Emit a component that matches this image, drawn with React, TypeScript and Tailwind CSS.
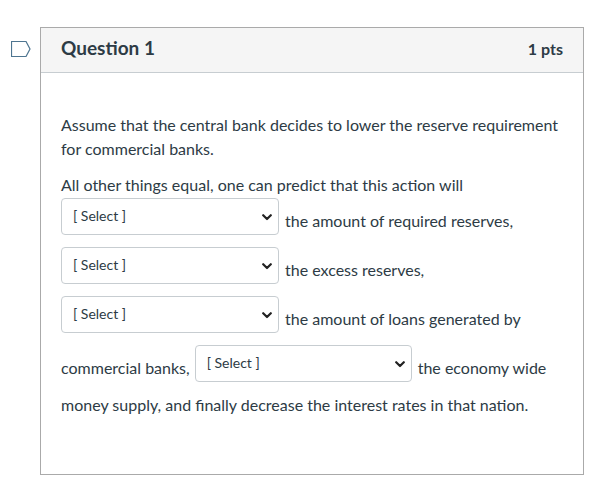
import React from "react";

function Chevron() {
  return (
    <svg width="10" height="7" viewBox="0 0 10 7" className="block">
      <path d="M1.2 1.2 L5 5 L8.8 1.2" fill="none" stroke="#222" strokeWidth="2.2" strokeLinecap="round" strokeLinejoin="round" />
    </svg>
  );
}

function Select({ w }: { w: string }) {
  return (
    <div className={`${w} h-[37px] mt-[1px] shrink-0 rounded-[4px] border border-[#c7cdd1] bg-white flex items-start justify-between pl-[11px] pr-[6px]`}>
      <span className="text-[14px] leading-[20px] mt-[7px] text-[#2d3b45]">[ Select ]</span>
      <span className="mt-[15px]"><Chevron /></span>
    </div>
  );
}

export default function App() {
  return (
    <div className="w-[600px] h-[501px] bg-white relative" style={{ fontFamily: "Lato, 'Noto Sans', sans-serif" }}>
      <div className="pt-[27px] flex">
        <div className="w-[40px] shrink-0 flex justify-start pl-[11px] pt-[14px]">
          <svg width="20" height="16" viewBox="0 0 20 16" className="block">
            <path d="M0.5 0.5 H15 L19 8 L15 15.5 H0.5 Z" fill="none" stroke="#4e7590" strokeWidth="1.2" />
          </svg>
        </div>
        <div className="w-[544px] h-[448px] border border-[#aaaaaa] flex flex-col text-[#2d3b45]">
          <div className="h-[45px] bg-[#f5f5f5] border-b border-[#c7cdd1] flex items-start justify-between pl-[20px] pr-[20px]">
            <span className="text-[19px] font-bold leading-[24px] mt-[8px]">Question 1</span>
            <span className="text-[16px] font-bold leading-[24px] mt-[9px] text-[#2d3b45]">1 pts</span>
          </div>
          <div className="pl-[20px] pt-[40px] text-[16px] leading-[24px]">
            <p className="w-[510px]">
              Assume that the central bank decides to lower the reserve requirement for commercial banks.
            </p>
            <p className="mt-[12px]">All other things equal, one can predict that this action will</p>
            <div className="h-[49px] flex items-start">
              <Select w="w-[218px]" />
              <span className="ml-[6px] mt-[12px]">the amount of required reserves,</span>
            </div>
            <div className="h-[49px] flex items-start">
              <Select w="w-[218px]" />
              <span className="ml-[6px] mt-[12px]">the excess reserves,</span>
            </div>
            <div className="h-[49px] flex items-start">
              <Select w="w-[218px]" />
              <span className="ml-[6px] mt-[12px]">the amount of loans generated by</span>
            </div>
            <div className="h-[49px] flex items-start">
              <span className="mt-[12px] mr-[5px]">commercial banks,</span>
              <Select w="w-[217px]" />
              <span className="ml-[6px] mt-[12px]">the economy wide</span>
            </div>
            <p>money supply, and finally decrease the interest rates in that nation.</p>
          </div>
        </div>
      </div>
    </div>
  );
}
